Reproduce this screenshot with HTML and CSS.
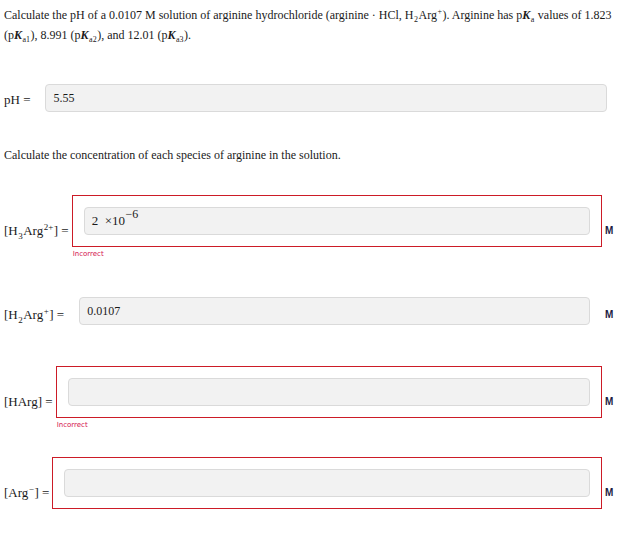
FILE: index.html
```html
<!DOCTYPE html>
<html>
<head>
<meta charset="utf-8">
<link rel="stylesheet" href="styles.css">
</head>
<body>
<div class="page">
  <p class="prompt">Calculate the pH of a 0.0107 M solution of arginine hydrochloride (arginine · HCl, H<sub>2</sub>Arg<sup>+</sup>). Arginine has p<i class="k">K</i><sub>a</sub> values of 1.823 (p<i class="k">K</i><sub>a1</sub>), 8.991 (p<i class="k">K</i><sub>a2</sub>), and 12.01 (p<i class="k">K</i><sub>a3</sub>).</p>

  <div class="row row-ph">
    <span class="label">pH =</span>
    <div class="field">
      <div class="wrap"><div class="input">5.55</div></div>
    </div>
  </div>

  <p class="prompt prompt2">Calculate the concentration of each species of arginine in the solution.</p>

  <div class="row row-1">
    <span class="label low">[H<sub>3</sub>Arg<sup>2+</sup>] =</span>
    <div class="field">
      <div class="wrap bad"><div class="input big">2&nbsp; ×10<sup class="exp">−6</sup></div></div>
      <div class="msg">Incorrect</div>
    </div>
    <span class="unit low">M</span>
  </div>

  <div class="row row-2">
    <span class="label mid">[H<sub>2</sub>Arg<sup>+</sup>] =</span>
    <div class="field">
      <div class="wrap"><div class="input">0.0107</div></div>
    </div>
    <span class="unit mid">M</span>
  </div>

  <div class="row row-3">
    <span class="label low">[HArg] =</span>
    <div class="field">
      <div class="wrap bad"><div class="input"></div></div>
      <div class="msg">Incorrect</div>
    </div>
    <span class="unit low">M</span>
  </div>

  <div class="row row-4">
    <span class="label low">[Arg<sup>−</sup>] =</span>
    <div class="field">
      <div class="wrap bad"><div class="input"></div></div>
      <div class="msg">Incorrect</div>
    </div>
    <span class="unit low">M</span>
  </div>
</div>
</body>
</html>
```

FILE: styles.css
```css
html, body {
  margin: 0;
  padding: 0;
  background: #ffffff;
}

.page {
  padding: 5px 3px 0 4px;
  font-family: "Liberation Serif", "Times New Roman", serif;
  font-size: 12px;
  color: #1a1a1a;
  width: 615px;
}

.prompt {
  margin: 0;
  line-height: 20px;
}

sub, sup {
  font-size: 8px;
  line-height: 0;
  padding: 0 0.5px;
}

.k {
  font-weight: bold;
}

.prompt2 {
  margin-top: 21px;
}

.row {
  display: flex;
  align-items: flex-start;
}

.row-ph {
  margin-top: 27px;
}

.row-1 {
  margin-top: 30px;
}

.row-2 {
  margin-top: 35px;
}

.row-3 {
  margin-top: 29px;
}

.row-4 {
  margin-top: 36px;
}

.label {
  white-space: nowrap;
  line-height: 16px;
  margin-top: 20px;
  font-size: 13px;
}

.label sub, .label sup {
  font-size: 9px;
}

.label.low {
  margin-top: 28px;
}

.label.mid {
  margin-top: 22px;
}

.field {
  flex: 1;
  margin-left: 3px;
  display: flex;
  flex-direction: column;
}

.wrap {
  border: 1px solid transparent;
  padding: 11px;
}

.wrap.bad {
  border-color: #cc1b27;
}

.input {
  height: 26px;
  background: #f2f2f2;
  border: 1px solid #dadada;
  border-radius: 4px;
  padding: 0 7px;
  line-height: 26px;
  font-size: 12px;
  color: #1a1a1a;
}

.input.big {
  font-size: 13px;
}

.exp {
  font-size: 12px;
  position: relative;
  top: -2px;
}

.msg {
  font-family: "DejaVu Sans", Verdana, sans-serif;
  font-size: 7px;
  color: #d4104c;
  margin-top: 3px;
  margin-left: 1px;
  line-height: 9px;
  height: 0;
  overflow: visible;
}

.unit {
  font-family: "Liberation Sans", Arial, sans-serif;
  font-weight: bold;
  font-size: 10px;
  color: #1c1c44;
  margin-left: 3px;
  width: 14px;
  line-height: 12px;
}

.unit.low {
  margin-top: 30px;
}

.unit.mid {
  margin-top: 24px;
}
```
